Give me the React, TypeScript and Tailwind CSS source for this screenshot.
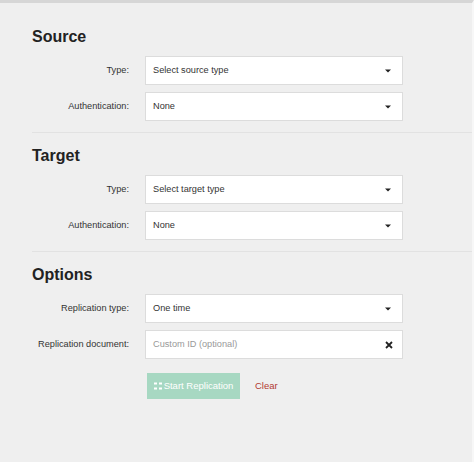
import React from "react";

function Caret() {
  return (
    <svg width="6" height="4" viewBox="0 0 6 4" className="absolute right-[11px] top-1/2 -translate-y-1/2">
      <path d="M0 0.5h6L3 3.5z" fill="#222" />
    </svg>
  );
}

function SelectRow({ label, value }: { label: string; value: string }) {
  return (
    <div className="flex items-center">
      <label className="w-[97px] text-right text-[9.2px] text-[#333]">{label}</label>
      <div className="relative ml-[16px] flex h-[29px] w-[258px] items-center border border-[#dcdcdc] bg-white px-[7px] text-[9.2px] text-[#333]">
        {value}
        <Caret />
      </div>
    </div>
  );
}

function Section({ title, children }: { title: string; children: React.ReactNode }) {
  return (
    <section>
      <h2 className="text-[16px] font-bold leading-[20px] text-[#222]">{title}</h2>
      <div className="mt-[9px] flex flex-col gap-[7px]">{children}</div>
    </section>
  );
}

export default function App() {
  return (
    <div
      className="h-[462px] w-full overflow-hidden border-t-[3px] border-r-[2px] border-[#d6d6d6] border-r-[#f7f7f7] bg-[#efefef] pl-[32px] pt-[24px]"
      style={{ fontFamily: '"Liberation Sans", Arial, sans-serif' }}
    >
      <Section title="Source">
        <SelectRow label="Type:" value="Select source type" />
        <SelectRow label="Authentication:" value="None" />
      </Section>
      <hr className="mb-[13px] mt-[11px] border-0 border-t border-[#e2e2e2]" />
      <Section title="Target">
        <SelectRow label="Type:" value="Select target type" />
        <SelectRow label="Authentication:" value="None" />
      </Section>
      <hr className="mb-[13px] mt-[11px] border-0 border-t border-[#e2e2e2]" />
      <Section title="Options">
        <SelectRow label="Replication type:" value="One time" />
        <div className="flex items-center">
          <label className="w-[97px] text-right text-[9.2px] text-[#333]">Replication document:</label>
          <div className="relative ml-[16px] flex h-[29px] w-[258px] items-center border border-[#dcdcdc] bg-white px-[7px] text-[9.2px] text-[#999]">
            Custom ID (optional)
            <svg width="8" height="8" viewBox="0 0 8 8" className="absolute right-[9px] top-1/2 -translate-y-1/2">
              <path d="M1 1l6 6M7 1L1 7" stroke="#222" strokeWidth="1.8" />
            </svg>
          </div>
        </div>
      </Section>
      <div className="ml-[115px] mt-[14px] flex items-center">
        <button className="flex h-[26px] w-[93px] items-center justify-center gap-[2px] bg-[#a7d8c2] text-[9.5px] text-white">
          <svg width="8" height="8" viewBox="0 0 8 8">
            <rect x="0" y="0.5" width="3" height="2" fill="#fff" />
            <rect x="5" y="0.5" width="3" height="2" fill="#fff" />
            <rect x="0" y="5.5" width="3" height="2" fill="#fff" />
            <rect x="5" y="5.5" width="3" height="2" fill="#fff" />
          </svg>
          Start Replication
        </button>
        <button className="ml-[15px] text-[9.5px] text-[#b23a32]">Clear</button>
      </div>
    </div>
  );
}
